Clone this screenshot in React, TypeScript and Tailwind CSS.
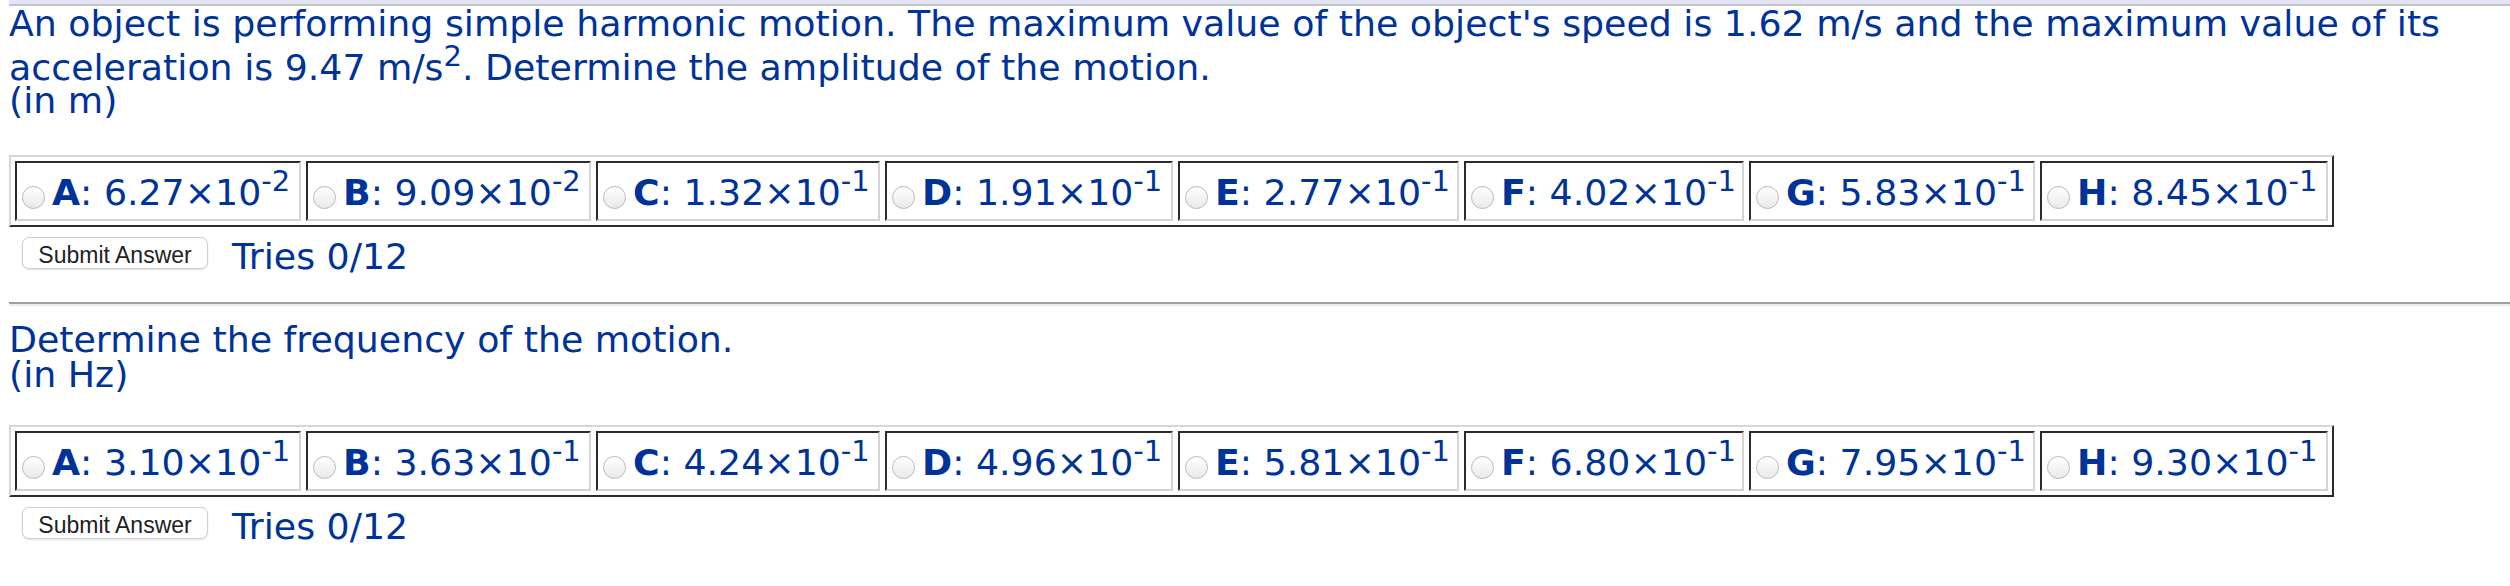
import React from 'react';

type Choice = { letter: string; mant: string; exp: string };

// cell widths follow the content widths in the screenshot
const cellWidths = ['w-[286px]', 'w-[285px]', 'w-[284px]', 'w-[288px]', 'w-[281px]', 'w-[280px]', 'w-[286px]', 'w-[288px]'];

const amplitude: Choice[] = [
    { letter: 'A', mant: '6.27', exp: '-2' },
    { letter: 'B', mant: '9.09', exp: '-2' },
    { letter: 'C', mant: '1.32', exp: '-1' },
    { letter: 'D', mant: '1.91', exp: '-1' },
    { letter: 'E', mant: '2.77', exp: '-1' },
    { letter: 'F', mant: '4.02', exp: '-1' },
    { letter: 'G', mant: '5.83', exp: '-1' },
    { letter: 'H', mant: '8.45', exp: '-1' },
];

const frequency: Choice[] = [
    { letter: 'A', mant: '3.10', exp: '-1' },
    { letter: 'B', mant: '3.63', exp: '-1' },
    { letter: 'C', mant: '4.24', exp: '-1' },
    { letter: 'D', mant: '4.96', exp: '-1' },
    { letter: 'E', mant: '5.81', exp: '-1' },
    { letter: 'F', mant: '6.80', exp: '-1' },
    { letter: 'G', mant: '7.95', exp: '-1' },
    { letter: 'H', mant: '9.30', exp: '-1' },
];

const Sup = ({ children }: { children: React.ReactNode }) => (
    <span className="relative -top-[14px] text-[29px] leading-none">{children}</span>
);

const Radio = () => (
    <span className="inline-block w-[23px] h-[23px] ml-[5px] mr-[7px] align-[-4px] rounded-full border border-[#b9b9b9] bg-linear-to-b from-white to-[#e9e9e9] shadow-[inset_0_1px_1px_rgba(255,255,255,0.9)]"></span>
);

const ChoiceTable = ({ choices }: { choices: Choice[] }) => (
    <div className="inline-flex gap-[5px] p-[4px] border-2 border-t-[#d6d6d6] border-l-[#d6d6d6] border-b-[#2b2b2b] border-r-[#2b2b2b]">
        {choices.map((c, i) => (
            <div
                key={c.letter}
                className={`${cellWidths[i]} h-[60px] pt-[12px] leading-[36px] whitespace-nowrap border-2 border-t-[#2b2b2b] border-l-[#2b2b2b] border-b-[#d4d4d4] border-r-[#d4d4d4]`}
            >
                <Radio />
                <span className="font-bold">{c.letter}</span>: {c.mant}×10<Sup>{c.exp}</Sup>
            </div>
        ))}
    </div>
);

const SubmitRow = () => (
    <div className="mt-[10px] flex items-start">
        <button className="ml-[13px] w-[186px] h-[32px] rounded-[7px] border border-[#cfcfcf] bg-white text-[23px] text-[#222] font-['Liberation_Sans',Arial,sans-serif] shadow-[0_1px_2px_rgba(0,0,0,0.12)]">
            Submit Answer
        </button>
        <span className="ml-[24px] pt-[3.5px] leading-[32px]">Tries 0/12</span>
    </div>
);

export default function App() {
    return (
        <div className="w-[2510px] h-[586px] bg-white pl-[9px] overflow-hidden text-[36.3px] text-[#003399] font-['DejaVu_Sans',Verdana,sans-serif]">
            <div className="h-[6px] bg-[#e4e4f7] border-b-2 border-[#c4c4c4]"></div>

            {/* question 1 */}
            <div className="mt-[2px] leading-[32px] whitespace-nowrap">
                An object is performing simple harmonic motion. The maximum value of the object's speed is 1.62 m/s and the maximum value of its
            </div>
            <div className="pt-[12px] leading-[32px] whitespace-nowrap">
                acceleration is 9.47 m/s<Sup>2</Sup>. Determine the amplitude of the motion.
            </div>
            <div className="leading-[32px]">(in m)</div>

            <div className="mt-[38px]">
                <ChoiceTable choices={amplitude} />
            </div>
            <SubmitRow />

            <div className="mt-[29.5px] border-t-2 border-[#a0a0a0] border-b-2 border-b-[#ececec]"></div>

            {/* question 2 */}
            <div className="mt-[17.5px] leading-[32px] whitespace-nowrap">Determine the frequency of the motion.</div>
            <div className="pt-[3px] leading-[32px]">(in Hz)</div>

            <div className="mt-[34.5px]">
                <ChoiceTable choices={frequency} />
            </div>
            <SubmitRow />
        </div>
    );
}
